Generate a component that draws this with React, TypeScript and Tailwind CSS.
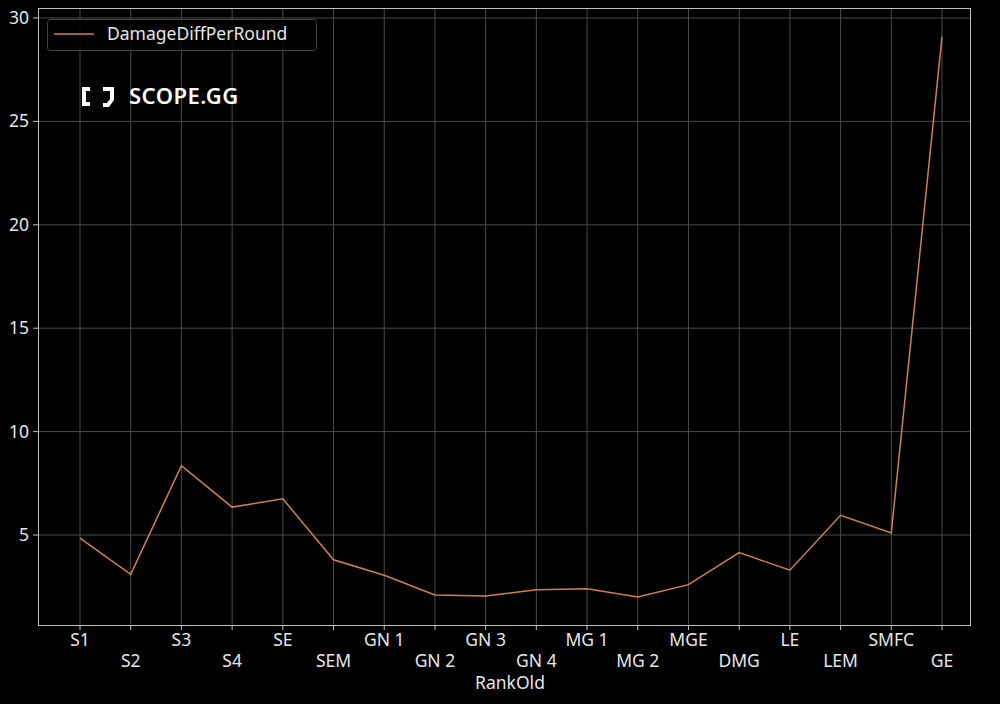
const xs = ["S1","S2","S3","S4","SE","SEM","GN 1","GN 2","GN 3","GN 4","MG 1","MG 2","MGE","DMG","LE","LEM","SMFC","GE"];
const vals = [4.85,3.1,8.35,6.35,6.75,3.8,3.05,2.1,2.05,2.35,2.4,2.0,2.6,4.15,3.3,5.95,5.1,29.1];
const X = (i: number) => 80 + i * (862 / 17);
const Y = (v: number) => 535 - (v - 5) * 20.68;

export default function App() {
  const pts = vals.map((v, i) => `${X(i)},${Y(v)}`).join(" ");
  return (
    <div className="w-[1000px] h-[704px] bg-black font-['DejaVu_Sans',sans-serif]">
      <svg width="1000" height="704">
        {xs.map((_, i) => (
          <line key={"gx" + i} x1={X(i)} x2={X(i)} y1={8} y2={625} stroke="#4a4a4a" strokeWidth="1" />
        ))}
        {[5, 10, 15, 20, 25, 30].map((v) => (
          <line key={"gy" + v} x1={38} x2={970} y1={Y(v)} y2={Y(v)} stroke="#4a4a4a" strokeWidth="1" />
        ))}
        <rect x={38.5} y={8.5} width={932} height={617} fill="none" stroke="#bfbfbf" strokeWidth="1" />
        {[5, 10, 15, 20, 25, 30].map((v) => (
          <g key={"ty" + v}>
            <line x1={33} x2={38} y1={Y(v)} y2={Y(v)} stroke="#bfbfbf" />
            <text x={29} y={Y(v) + 6} fill="#e6e6e6" fontSize="17.5" textAnchor="end">{v}</text>
          </g>
        ))}
        {xs.map((l, i) => (
          <g key={"tx" + i}>
            <line x1={X(i)} x2={X(i)} y1={625} y2={630} stroke="#bfbfbf" />
            <text x={X(i)} y={i % 2 === 0 ? 646 : 667} fill="#e6e6e6" fontSize="17.5" textAnchor="middle">{l}</text>
          </g>
        ))}
        <text x={510} y={689} fill="#e6e6e6" fontSize="17.5" textAnchor="middle">RankOld</text>
        <polyline points={pts} fill="none" stroke="#d0814a" strokeWidth="1.5" />
        <rect x={47.5} y={19.5} width={269} height={31} rx={3} fill="#000" fillOpacity="0.8" stroke="#444" />
        <line x1={54} x2={94} y1={34} y2={34} stroke="#d0814a" strokeWidth="1.5" />
        <text x={107} y={40} fill="#e6e6e6" fontSize="17.5">DamageDiffPerRound</text>
        <g fill="#fff">
          <path d="M82 87 h8 v4 h-4 v11 h4 v4 h-8 z" />
          <path d="M103 87 h11 v13 l-5 7 h-6 v-4 h4 l3 -4 v-8 h-7 z" />
        </g>
        <text x={129} y={104} fill="#fff" fontSize="22" fontWeight="600" letterSpacing="0.5">SCOPE.GG</text>
      </svg>
    </div>
  );
}
